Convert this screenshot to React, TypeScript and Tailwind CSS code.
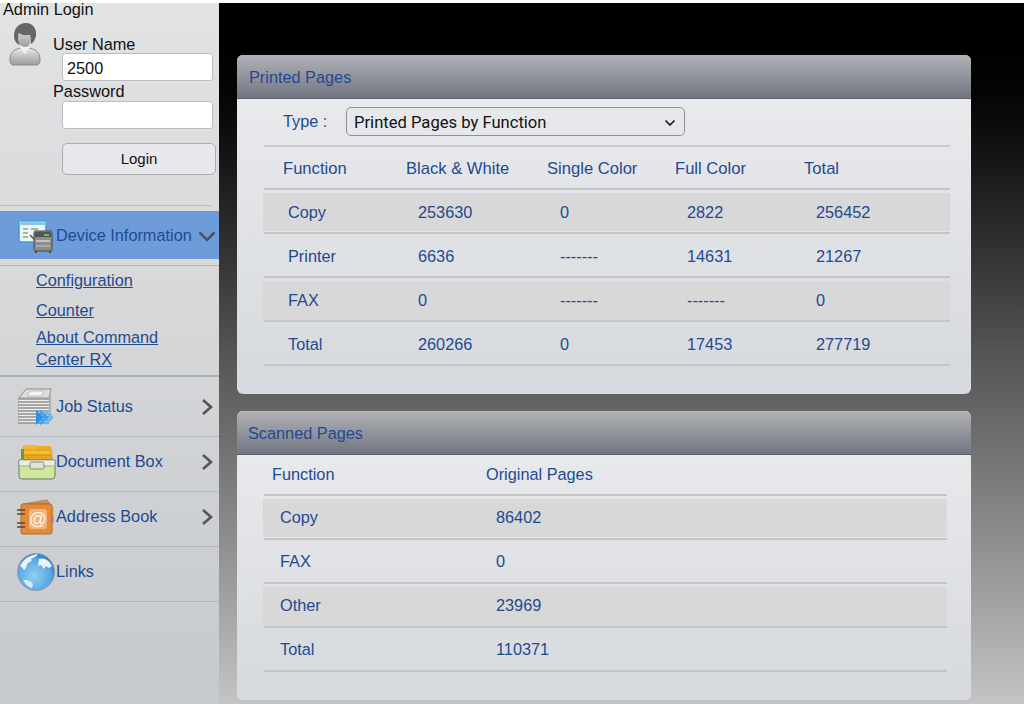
import { ChevronDown } from 'lucide-react';

const printedRows = [
  ['Copy', '253630', '0', '2822', '256452'],
  ['Printer', '6636', '-------', '14631', '21267'],
  ['FAX', '0', '-------', '-------', '0'],
  ['Total', '260266', '0', '17453', '277719'],
];

const scannedRows = [
  ['Copy', '86402'],
  ['FAX', '0'],
  ['Other', '23969'],
  ['Total', '110371'],
];

function UserIcon() {
  return (
    <svg width="32" height="44" viewBox="0 0 32 44">
      <defs>
        <linearGradient id="ub" x1="0" y1="0" x2="0" y2="1">
          <stop offset="0" stopColor="#e8e8e8" />
          <stop offset="1" stopColor="#9a9a9a" />
        </linearGradient>
        <linearGradient id="uf" x1="0" y1="0" x2="0" y2="1">
          <stop offset="0" stopColor="#cfcfcf" />
          <stop offset="1" stopColor="#9c9c9c" />
        </linearGradient>
      </defs>
      <path d="M1 38c0-7 3-10 10-12l5 5 5-5c7 2 10 5 10 12 0 3-1 5-4 5H5c-3 0-4-2-4-5z" fill="url(#ub)" stroke="#8a8a8a" />
      <path d="M11 26l5 6 5-6-2-3h-6z" fill="#f2f2f2" />
      <path d="M5 14C5 6 10 1 17 1c7 0 11 6 10 13-1 4-3 7-5 8l-1-9c-5 1-9 0-11-2-1 4-1 8 1 12-3-1-6-4-6-9z" fill="#666" />
      <path d="M10 11c2 2 6 3 11 2 1 3 1 6 0 8-1 3-3 4-5 4-3 0-5-2-6-5-1-3-1-6 0-9z" fill="url(#uf)" />
    </svg>
  );
}

function DeviceIcon() {
  return (
    <svg width="36" height="34" viewBox="0 0 36 34">
      <rect x="1" y="1" width="27" height="21" rx="2" fill="#eef4f8" stroke="#3f9ccf" strokeWidth="1.5" />
      <rect x="1" y="1" width="27" height="4" rx="1" fill="#8cc4e6" />
      <path d="M5 9h5M13 9h7M5 13h5M5 17h5" stroke="#7fae75" strokeWidth="1.6" />
      <path d="M12 15l6 6" stroke="#555" strokeWidth="1.5" />
      <rect x="16" y="11" width="18" height="20" rx="1.5" fill="#8d8d8d" stroke="#4b4b4b" />
      <rect x="17" y="12" width="16" height="5" fill="#555" />
      <rect x="26" y="14" width="5" height="2" fill="#67c24f" />
      <rect x="18" y="20" width="14" height="2" fill="#c2c2c2" />
      <rect x="18" y="25" width="14" height="2" fill="#a9a9a9" />
      <path d="M18 31v2M32 31v2" stroke="#444" strokeWidth="2" />
    </svg>
  );
}

function JobIcon() {
  return (
    <svg width="40" height="38" viewBox="0 0 40 38">
      <path d="M3 10 10 1h25l-2 9z" fill="#dedede" stroke="#8f8f8f" />
      <path d="M14 3h14l-2 5H11z" fill="#f2f2f2" stroke="#b0b0b0" strokeWidth="0.7" />
      <rect x="3" y="10" width="30" height="25" fill="#efefef" />
      <path d="M33 10l2-9v25l-2 9z" fill="#b0b0b0" />
      <path d="M2 11h31M2 14h31M2 17h31M2 20h31M2 23h31M2 26h31M2 29h31M2 32h31M2 35h31" stroke="#8e8e8e" strokeWidth="1.3" />
      <path d="M20 22l8 7.5-8 7.5z" fill="#2692ea" />
      <path d="M25 22l8 7.5-8 7.5-2-2 5.5-5.5-5.5-5.5z" fill="#3da2ee" />
      <path d="M30 22l8 7.5-8 7.5-2-2 5.5-5.5-5.5-5.5z" fill="#66baf3" />
    </svg>
  );
}

function BoxIcon() {
  return (
    <svg width="40" height="36" viewBox="0 0 40 36">
      <path d="M6 9l1-7h28l1 7z" fill="#eaa91e" />
      <rect x="8" y="1" width="14" height="5" rx="2" fill="#f5b52c" />
      <rect x="24" y="2" width="11" height="5" rx="2" fill="#f0ae25" />
      <rect x="6" y="6" width="30" height="5" rx="1.5" fill="#f7bc33" stroke="#c48a17" strokeWidth="0.6" />
      <rect x="6" y="11" width="30" height="5" rx="1" fill="#e7a41d" stroke="#c48a17" strokeWidth="0.6" />
      <path d="M5 5h3v10H5z" fill="#5f9e41" />
      <path d="M3 16h36v16a3 3 0 0 1-3 3H6a3 3 0 0 1-3-3z" fill="#cfe89a" stroke="#6e7669" />
      <path d="M3 16h36v6H3z" fill="#ecece4" stroke="#8d8f88" strokeWidth="0.7" />
      <rect x="14" y="18" width="14" height="7" rx="1.5" fill="#dfe6cd" stroke="#7d8870" />
    </svg>
  );
}

function BookIcon() {
  return (
    <svg width="40" height="36" viewBox="0 0 40 36">
      <path d="M7 5 31 1l3 4z" fill="#cf9460" stroke="#a96c3a" strokeWidth="0.7" />
      <rect x="35" y="8" width="3" height="8" rx="1" fill="#efc03d" />
      <rect x="35" y="16" width="3" height="8" rx="1" fill="#b596dc" />
      <rect x="5" y="5" width="31" height="30" rx="2" fill="#e38a3b" stroke="#b3672a" />
      <path d="M1 11h8M1 15h8M1 24h8M1 28h8" stroke="#574834" strokeWidth="1.7" />
      <rect x="13" y="10" width="18" height="20" rx="3" fill="#f2b27c" />
      <text x="22" y="26" textAnchor="middle" fontSize="18" fontFamily="Liberation Sans" fill="#fff6ea">@</text>
    </svg>
  );
}

function GlobeIcon() {
  return (
    <svg width="40" height="38" viewBox="0 0 40 38">
      <defs>
        <radialGradient id="gb" cx="0.45" cy="0.6" r="0.6">
          <stop offset="0" stopColor="#92cff5" />
          <stop offset="0.75" stopColor="#5aa6e2" />
          <stop offset="1" stopColor="#2f7cc2" />
        </radialGradient>
      </defs>
      <circle cx="20" cy="19" r="18.5" fill="url(#gb)" stroke="#8d9aa6" />
      <path d="M4 13C8 5 14 2 22 1c-2 3-5 4-7 5 2 2-1 3-3 4-2 2-1 5-4 7-1-2-2-3-4-4z" fill="#eaf3fa" />
      <path d="M23 6c5-2 10 1 13 7l-3 2-3-2-2 3-3-4-3 1z" fill="#eaf3fa" />
      <path d="M7 27c4-1 8 1 10 4l-1 4c-4-1-7-4-9-8z" fill="#d7eafa" />
    </svg>
  );
}

function ArrowRight() {
  return (
    <svg width="12" height="18" viewBox="0 0 12 18" className="shrink-0">
      <path d="M2 2l8 7-8 7" fill="none" stroke="#555" strokeWidth="2.6" />
    </svg>
  );
}

function NavRow({ icon, label, arrow, first }: { icon: React.ReactNode; label: string; arrow?: boolean; first?: boolean }) {
  return (
    <div className={`flex items-center border-b border-[#b5b8bb] pr-[6px] text-[#1f4a92] ${first ? 'h-[60px]' : 'h-[55px] pb-[5px]'}`}>
      <div className="w-[56px] pl-[16px] shrink-0">{icon}</div>
      <span className="flex-1">{label}</span>
      {arrow && <ArrowRight />}
    </div>
  );
}

export default function App() {
  return (
    <div className="h-[704px] w-[1024px] overflow-hidden flex text-[16.3px] bg-white font-['Liberation_Sans',Arial,sans-serif]">
      <aside className="w-[219px] shrink-0 mt-[3px] bg-gradient-to-b from-[#e2e3e3] to-[#c6c9cd]">
        <div className="leading-[12px] pl-[3px] text-[#111]">Admin Login</div>
        <div className="flex pl-[9px] h-[190px]">
          <div className="pt-[7px] w-[44px] shrink-0"><UserIcon /></div>
          <div className="flex flex-col">
            <div className="mt-[20px] leading-[18px] text-[#111]">User Name</div>
            <input readOnly value="2500" className="ml-[9px] w-[151px] h-[28px] bg-white border border-[#b9bcc2] rounded-[3px] px-[4px] pt-[2px] text-[#111] outline-none" />
            <div className="leading-[18px] mt-[1px] text-[#111]">Password</div>
            <input readOnly className="ml-[9px] mt-[1px] w-[151px] h-[28px] bg-white border border-[#b9bcc2] rounded-[3px] outline-none" />
            <button className="ml-[9px] mt-[14px] w-[154px] h-[32px] bg-[#e7e7ec] border border-[#a9acb1] rounded-[5px] text-[15px] text-[#111]">Login</button>
          </div>
        </div>
        <div className="border-t border-[#bbbdbf] w-[212px] h-[6px]" />
        <div className="h-[48px] bg-[#6e9bd9] flex items-center pr-[3px] text-[#1f4a92]">
          <div className="w-[56px] pl-[18px] pt-[3px] shrink-0"><DeviceIcon /></div>
          <span className="flex-1">Device Information</span>
          <svg width="18" height="11" viewBox="0 0 18 11" className="shrink-0 mt-[2px]">
            <path d="M1.5 1.5 9 9l7.5-7.5" fill="none" stroke="#46556c" strokeWidth="2.6" />
          </svg>
        </div>
        <div className="h-[7px] border-b border-[#b5b8bb]" />
        <div className="h-[111px] border-b-2 border-[#adb0b4] pl-[36px] text-[#1f4a92] underline leading-[22px]">
          <div className="pt-[3px]"><a>Configuration</a></div>
          <div className="pt-[8px]"><a>Counter</a></div>
          <div className="pt-[5px]"><a>About Command</a></div>
          <div><a>Center RX</a></div>
        </div>
        <NavRow first icon={<JobIcon />} label="Job Status" arrow />
        <NavRow icon={<BoxIcon />} label="Document Box" arrow />
        <NavRow icon={<BookIcon />} label="Address Book" arrow />
        <NavRow icon={<GlobeIcon />} label="Links" />
      </aside>
      <main className="flex-1 mt-[3px] bg-gradient-to-b from-[#000000] via-[#555555] via-50% to-[#c4c4c4] pl-[18px] pt-[52px]">
        <section className="w-[734px] h-[339px] rounded-[6px] overflow-hidden bg-gradient-to-b from-[#ebecee] to-[#d6d9dd]">
          <h2 className="h-[44px] pt-[1px] flex items-center pl-[12px] text-[#1f4a92] bg-gradient-to-b from-[#b2b3b7] to-[#727682] border-b border-[#5d616b]">Printed Pages</h2>
          <div className="pl-[27px] pr-[21px]">
            <div className="flex items-center h-[48px] pb-[1px] border-b-2 border-[#c9cbce]">
              <span className="pl-[19px] w-[82px] text-[#1f4a92]">Type :</span>
              <div className="w-[339px] h-[29px] pt-[3px] border border-[#8e9096] rounded-[5px] bg-[#e7e8ec] flex items-center justify-between pl-[7px] pr-[6px] text-[16.6px] text-[#111] font-['Roboto',sans-serif]">
                <span>Printed Pages by Function</span>
                <ChevronDown size={16} strokeWidth={2.5} />
              </div>
            </div>
            <div className="grid grid-cols-[123px_141px_128px_129px_1fr] h-[43px] pt-[3px] items-center pl-[19px] border-b-2 border-[#c3c5c9] text-[16.6px] text-[#1f4a92]">
              <span>Function</span>
              <span>Black &amp; White</span>
              <span>Single Color</span>
              <span>Full Color</span>
              <span>Total</span>
            </div>
            {printedRows.map((row, i) => (
              <div key={row[0]} className="h-[44px] pt-[3px] pb-[1px] border-b-2 border-[#c3c5c9]">
                <div className={`grid grid-cols-[130px_142px_127px_129px_1fr] h-full -ml-[1px] items-center pl-[25px] text-[#1f4a92] ${i % 2 === 0 ? 'bg-[#d8d8d8]' : ''}`}>
                  {row.map((c, j) => <span key={j}>{c}</span>)}
                </div>
              </div>
            ))}
          </div>
        </section>
        <section className="mt-[17px] w-[734px] h-[289px] rounded-[6px] overflow-hidden bg-gradient-to-b from-[#ebecee] to-[#d6d9dd]">
          <h2 className="h-[44px] pt-[1px] flex items-center pl-[11px] text-[#1f4a92] bg-gradient-to-b from-[#b2b3b7] to-[#727682] border-b border-[#5d616b]">Scanned Pages</h2>
          <div className="pl-[27px] pr-[24px]">
            <div className="grid grid-cols-[214px_1fr] h-[41px] items-center pl-[8px] border-b-2 border-[#c3c5c9] text-[#1f4a92]">
              <span>Function</span>
              <span>Original Pages</span>
            </div>
            {scannedRows.map((row, i) => (
              <div key={row[0]} className="h-[44px] pt-[3px] pb-[1px] border-b-2 border-[#c3c5c9]">
                <div className={`grid grid-cols-[216px_1fr] h-full -ml-[1px] pb-[2px] items-center pl-[17px] text-[#1f4a92] ${i % 2 === 0 ? 'bg-[#d8d8d8]' : ''}`}>
                  <span>{row[0]}</span>
                  <span>{row[1]}</span>
                </div>
              </div>
            ))}
          </div>
        </section>
      </main>
    </div>
  );
}
